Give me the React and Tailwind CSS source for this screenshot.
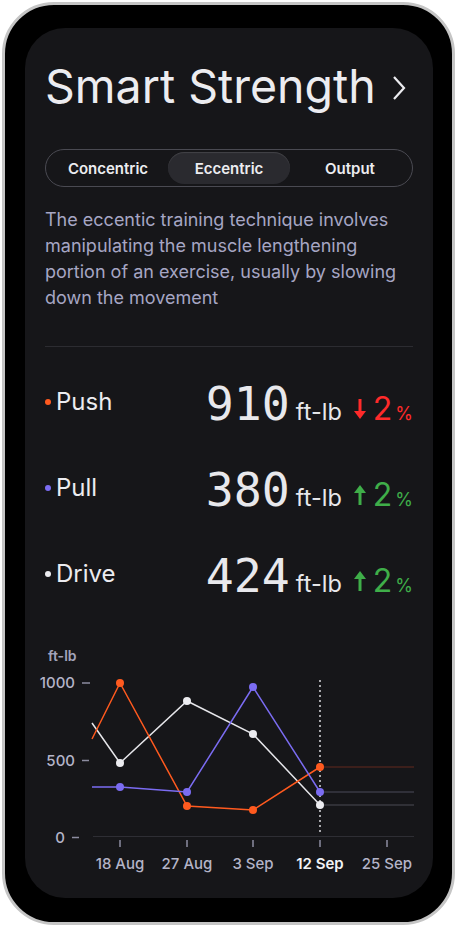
import React from 'react'

const rows = [
  { name: 'Push', dot: 'bg-[#ff5a1f]', value: '910', up: false },
  { name: 'Pull', dot: 'bg-[#7b6cf2]', value: '380', up: true },
  { name: 'Drive', dot: 'bg-[#ececf0]', value: '424', up: true },
]

function Arrow({ up }) {
  const color = up ? '#3fae49' : '#ff2a2a'
  return (
    <svg width="14" height="22" viewBox="0 0 14 22" className="mr-[6px]">
      {up ? (
        <g>
          <line x1="7" y1="21" x2="7" y2="6" stroke={color} strokeWidth="3" />
          <polygon points="1,9 7,1 13,9" fill={color} />
        </g>
      ) : (
        <g>
          <line x1="7" y1="1" x2="7" y2="16" stroke={color} strokeWidth="3" />
          <polygon points="1,13 7,21 13,13" fill={color} />
        </g>
      )}
    </svg>
  )
}

function Chart() {
  const xs = [75, 142, 208, 275, 342]
  const labels = ['18 Aug', '27 Aug', '3 Sep', '12 Sep', '25 Sep']
  const orange = [[47, 94], [75, 38], [142, 161], [208, 165], [275, 122]]
  const white = [[47, 78], [75, 118], [142, 56], [208, 89], [275, 160]]
  const purple = [[47, 142], [75, 142], [142, 147], [208, 42], [275, 147]]
  const pts = (a) => a.map((p) => p.join(',')).join(' ')
  const font = 'Inter, sans-serif'

  return (
    <svg width="369" height="230" viewBox="0 0 369 230" className="mt-[40px] overflow-visible">
      <text x="3" y="16" fontFamily={font} fontSize="14" fontWeight="600" fill="#a3a3bb">ft-lb</text>

      <text x="30" y="43" textAnchor="end" fontFamily={font} fontSize="15" fontWeight="500" fill="#b4b4c8">1000</text>
      <line x1="37" y1="38" x2="45" y2="38" stroke="#8c8ca0" strokeWidth="1.5" />
      <text x="30" y="121" textAnchor="end" fontFamily={font} fontSize="15" fontWeight="500" fill="#b4b4c8">500</text>
      <line x1="37" y1="115.5" x2="44" y2="115.5" stroke="#8c8ca0" strokeWidth="1.5" />
      <text x="20" y="198" textAnchor="end" fontFamily={font} fontSize="15" fontWeight="500" fill="#b4b4c8">0</text>
      <line x1="27" y1="192.5" x2="34" y2="192.5" stroke="#8c8ca0" strokeWidth="1.5" />

      <line x1="48" y1="191.5" x2="369" y2="191.5" stroke="#2e2e34" strokeWidth="1" />
      {xs.map((x) => (
        <line key={x} x1={x} y1="195" x2={x} y2="202" stroke="#8c8ca0" strokeWidth="1.5" />
      ))}
      {labels.map((l, i) => (
        <text
          key={l}
          x={xs[i]}
          y="224"
          textAnchor="middle"
          fontFamily={font}
          fontSize="15"
          fontWeight={i === 3 ? '600' : '500'}
          fill={i === 3 ? '#f2f2f5' : '#b4b4c8'}
        >
          {l}
        </text>
      ))}

      <line x1="275" y1="122" x2="369" y2="122" stroke="#4a231d" strokeWidth="1.5" />
      <line x1="275" y1="147" x2="369" y2="147" stroke="#3a3a44" strokeWidth="1.5" />
      <line x1="275" y1="160" x2="369" y2="160" stroke="#3a3a40" strokeWidth="1.5" />

      <line x1="275" y1="35" x2="275" y2="188" stroke="#d8d8dc" strokeWidth="1.5" strokeDasharray="2 3" />

      <polyline points={pts(white)} fill="none" stroke="#e6e6ea" strokeWidth="1.5" />
      <polyline points={pts(orange)} fill="none" stroke="#ff5a1f" strokeWidth="1.5" />
      <polyline points={pts(purple)} fill="none" stroke="#7b6cf2" strokeWidth="1.5" />

      {white.slice(1).map(([x, y]) => (
        <circle key={'w' + x} cx={x} cy={y} r="4" fill="#ececf0" />
      ))}
      {orange.slice(1).map(([x, y]) => (
        <circle key={'o' + x} cx={x} cy={y} r="4" fill="#ff5a1f" />
      ))}
      {purple.slice(1).map(([x, y]) => (
        <circle key={'p' + x} cx={x} cy={y} r="4" fill="#7b6cf2" />
      ))}
    </svg>
  )
}

export default function App() {
  return (
    <div className="w-[457px] h-[927px] bg-white p-[2px] font-['Inter',sans-serif]">
      <div className="h-full rounded-[52px] border-[3px] border-[#c5c5c5] bg-black pt-[23px] pl-[20px] pr-[19px] pb-[24px]">
        <div className="h-full rounded-[40px] bg-[#161619] px-5 pt-[33px] flex flex-col">
          <div className="flex items-center justify-between">
            <h1 className="text-[46.5px] leading-[50px] font-normal text-[#ececf0] whitespace-nowrap">Smart Strength</h1>
            <svg width="16" height="26" viewBox="0 0 16 26" className="mr-[6px] mt-[4px]">
              <polyline points="3,2 13,13 3,24" fill="none" stroke="#ececf0" strokeWidth="2.2" />
            </svg>
          </div>

          <div className="mt-[38px] h-[38px] rounded-full border border-[#4a4a52] flex items-center px-[2px]">
            <div className="flex-1 text-center text-[15px] font-semibold text-[#ececf0] pt-[2px]">Concentric</div>
            <div className="w-[122px] h-[32px] rounded-full bg-[#2a2a2f] shadow-[inset_0_1px_1px_rgba(255,255,255,0.12)] flex items-center justify-center text-[15px] font-semibold text-[#ececf0] pt-[2px]">
              Eccentric
            </div>
            <div className="flex-1 text-center text-[15px] font-semibold text-[#ececf0] pt-[2px]">Output</div>
          </div>

          <p className="mt-[20px] text-[18px] leading-[26px] text-[#a6a6c4]">
            The eccentic training technique involves manipulating the muscle lengthening portion of an exercise, usually by slowing down the movement
          </p>

          <div className="mt-[35px] h-px bg-[#2c2c31]" />

          <div className="mt-[30px] flex flex-col gap-[30px]">
            {rows.map((r) => (
              <div key={r.name} className="h-[56px] flex items-center justify-between">
                <div className="flex items-center gap-[5px] -mt-[6px]">
                  <span className={'w-[6px] h-[6px] rounded-full ' + r.dot} />
                  <span className="text-[24px] text-[#ececf0]">{r.name}</span>
                </div>
                <div className="flex items-baseline">
                  <span className="font-['DejaVu_Sans_Mono',monospace] text-[46.5px] leading-none text-[#e8e8ec] font-light">{r.value}</span>
                  <span className="ml-[6px] text-[23.5px] text-[#e8e8ec]">ft-lb</span>
                  <span className="ml-[11px] self-center mt-[8px]">
                    <Arrow up={r.up} />
                  </span>
                  <span className={'text-[32px] leading-none ' + (r.up ? 'text-[#3fae49]' : 'text-[#ff2a2a]')}>2</span>
                  <span className={'ml-[3px] text-[18px] ' + (r.up ? 'text-[#3fae49]' : 'text-[#ff2a2a]')}>%</span>
                </div>
              </div>
            ))}
          </div>

          <Chart />
        </div>
      </div>
    </div>
  )
}
